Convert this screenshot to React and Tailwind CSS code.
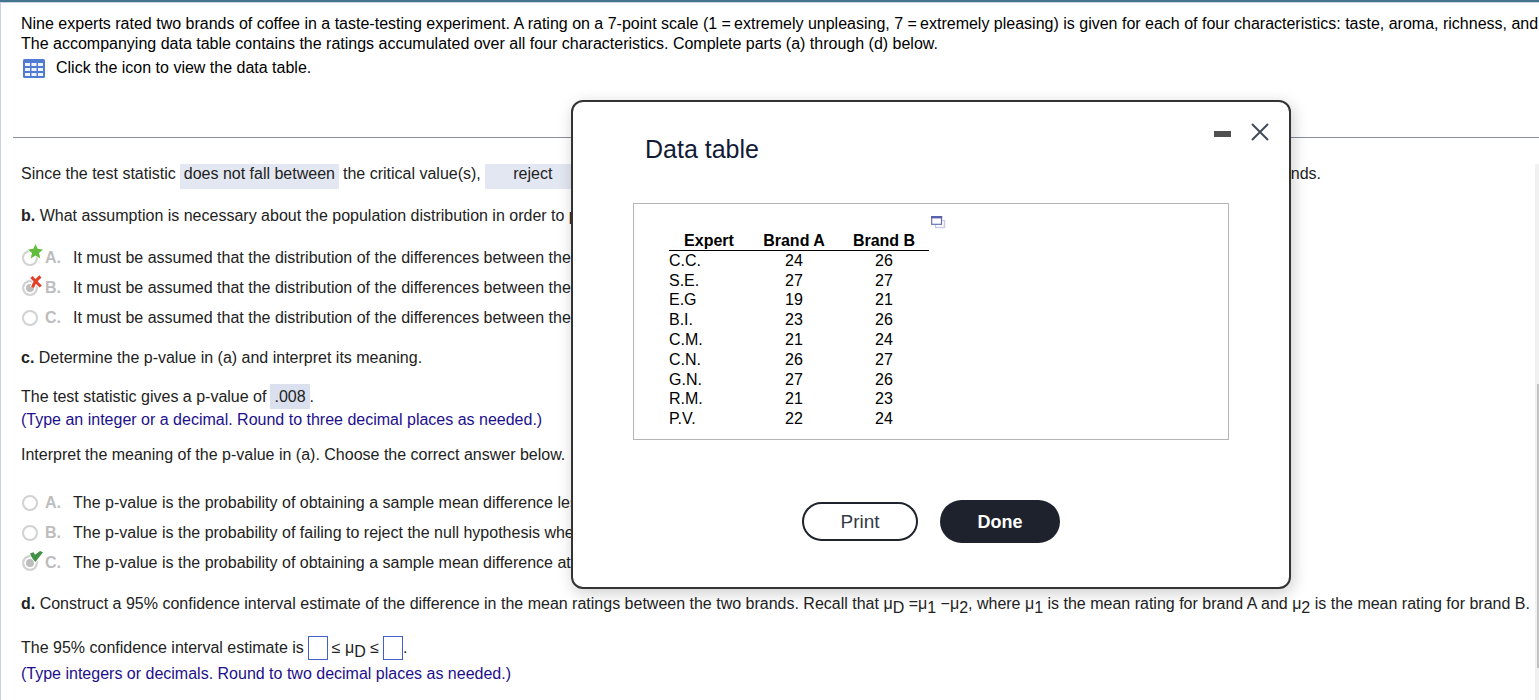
import { useState } from "react";

const ratings = [
  { expert: "C.C.", a: 24, b: 26 },
  { expert: "S.E.", a: 27, b: 27 },
  { expert: "E.G", a: 19, b: 21 },
  { expert: "B.I.", a: 23, b: 26 },
  { expert: "C.M.", a: 21, b: 24 },
  { expert: "C.N.", a: 26, b: 27 },
  { expert: "G.N.", a: 27, b: 26 },
  { expert: "R.M.", a: 21, b: 23 },
  { expert: "P.V.", a: 22, b: 24 },
];

const assumptionChoices = [
  { letter: "A", text: "It must be assumed that the distribution of the differences between the measurements is normal.", mark: "star" },
  { letter: "B", text: "It must be assumed that the distribution of the differences between the measurements is skewed.", mark: "cross", checked: true },
  { letter: "C", text: "It must be assumed that the distribution of the differences between the measurements is uniform." },
];

const meaningChoices = [
  { letter: "A", text: "The p-value is the probability of obtaining a sample mean difference less than the observed one." },
  { letter: "B", text: "The p-value is the probability of failing to reject the null hypothesis when it is false." },
  { letter: "C", text: "The p-value is the probability of obtaining a sample mean difference at least as extreme.", mark: "check", checked: true },
];

const TableIcon = () => (
  <svg width="22" height="20" viewBox="0 0 22 20" aria-hidden="true">
    <rect x="0" y="0" width="22" height="19" rx="1.5" fill="#4f7bd3" />
    <g fill="#eef3fd">
      <rect x="2" y="4" width="5" height="3" />
      <rect x="8.5" y="4" width="5" height="3" />
      <rect x="15" y="4" width="5" height="3" />
      <rect x="2" y="9" width="5" height="3" />
      <rect x="8.5" y="9" width="5" height="3" />
      <rect x="15" y="9" width="5" height="3" />
      <rect x="2" y="14" width="5" height="3" />
      <rect x="8.5" y="14" width="5" height="3" />
      <rect x="15" y="14" width="5" height="3" />
    </g>
  </svg>
);

const CopyIcon = () => (
  <svg width="15" height="13" viewBox="0 0 15 13" aria-hidden="true">
    <rect x="4.5" y="4.5" width="9" height="7" fill="#fff" stroke="#c9cbe8" strokeWidth="1.4" />
    <rect x="0.7" y="1" width="9.8" height="7.3" fill="#fff" stroke="#6a70b4" strokeWidth="1.2" />
    <rect x="0" y="0" width="11.2" height="2.4" fill="#5a61ab" />
  </svg>
);

// the white outlines cut the mark out of the radio's ring
const Mark = ({ type }) => {
  if (type === "star") {
    return (
      <svg className="absolute -top-1.5 left-1.5 overflow-visible" width="15" height="15" viewBox="0 0 15 15" aria-hidden="true">
        <path d="M7.5 0 L9.6 4.8 L15 5.4 L11 8.9 L12.3 14.4 L7.5 11.4 L2.7 14.4 L4 8.9 L0 5.4 L5.4 4.8 Z" fill="#62bd3c" stroke="#fff" strokeWidth="1.5" paintOrder="stroke" />
      </svg>
    );
  }
  if (type === "cross") {
    return (
      <svg className="absolute -top-1 left-2 overflow-visible" width="12" height="12" viewBox="0 0 12 12" aria-hidden="true">
        <path d="M1.5 1 C4 4 7 7 10.8 10.5 M10.5 0.5 C6 4 4 7 2.5 11.5" stroke="#fff" strokeWidth="5" fill="none" />
        <path d="M1.5 1 C4 4 7 7 10.8 10.5 M10.5 0.5 C6 4 4 7 2.5 11.5" stroke="#e23f26" strokeWidth="3" fill="none" />
      </svg>
    );
  }
  return (
    <svg className="absolute -top-1 left-2 overflow-visible" width="13" height="12" viewBox="0 0 13 12" aria-hidden="true">
      <path d="M0 2.5 L3.5 1.2 L5 3.8 L10 0 L13 1.2 C10.5 4.5 8 7.5 5.4 11 C3 8.5 1 5.5 0 2.5 Z" fill="#3f9145" stroke="#fff" strokeWidth="1.5" paintOrder="stroke" />
    </svg>
  );
};

const Choices = ({ name, label, items, className }) => (
  <div role="radiogroup" aria-label={label} className={`flex flex-col gap-2.5 ${className}`}>
    {items.map((item) => (
      <label key={item.letter} className="flex items-center whitespace-nowrap">
        <span className="relative ml-px mr-[7px] flex">
          <input
            type="radio"
            name={name}
            defaultChecked={item.checked}
            disabled
            className="appearance-none size-4 rounded-full border-2 border-[#d2d2d2] bg-white checked:bg-[#bdbdbd] checked:shadow-[inset_0_0_0_2px_white]"
          />
          {item.mark && <Mark type={item.mark} />}
        </span>
        <span className="w-7 font-bold text-[#bdbdbd]">{item.letter}.</span>
        <span>{item.text}</span>
      </label>
    ))}
  </div>
);

const Mu = ({ sub }) => (
  <span>
    μ<sub className="text-base leading-none">{sub}</sub>
  </span>
);

const DataTableDialog = ({ onClose }) => (
  <div
    role="dialog"
    aria-labelledby="dialog-title"
    className="absolute top-[98px] left-[571px] w-[720px] rounded-xl border-2 border-[#333] bg-white px-15 pb-11 shadow-[2px_4px_16px_rgba(0,0,0,0.2)]"
  >
    <div className="flex items-start justify-between pt-5">
      <h2 id="dialog-title" className="mt-[11px] ml-3 text-[25px] leading-8 text-[#131a35]">Data table</h2>
      <div className="-mr-10 flex items-center gap-5">
        <button type="button" aria-label="Minimize" className="flex h-5 items-center pt-1">
          <span className="block h-1.5 w-[17px] bg-[#505050]" />
        </button>
        <button type="button" aria-label="Close" className="flex h-5 items-center" onClick={onClose}>
          <svg width="18" height="18" viewBox="0 0 18 18" aria-hidden="true">
            <path d="M1 1 L17 17 M17 1 L1 17" stroke="#414b59" strokeWidth="2" />
          </svg>
        </button>
      </div>
    </div>

    <div className="mt-[38px] flex items-start border border-[#b5b5b5] pt-3 pb-2.5 pl-[35px]">
      <table className="mt-4 h-[197px] w-65 table-fixed border-collapse text-center text-black">
        <thead>
          <tr className="border-b border-black leading-[18px]">
            <th className="w-20 p-0">Expert</th>
            <th className="p-0">Brand A</th>
            <th className="p-0">Brand B</th>
          </tr>
        </thead>
        <tbody>
          {ratings.map((row) => (
            <tr key={row.expert} className="leading-[18px]">
              <td className="p-0 text-left">{row.expert}</td>
              <td className="p-0">{row.a}</td>
              <td className="p-0">{row.b}</td>
            </tr>
          ))}
        </tbody>
      </table>
      <button type="button" aria-label="Copy table" className="ml-0.5">
        <CopyIcon />
      </button>
    </div>

    <div className="mt-15 flex items-center justify-center gap-[22px]">
      <button type="button" className="h-[39px] w-[116px] rounded-full border-2 border-[#1e222d] text-[19px] text-[#333a46]">
        Print
      </button>
      <button type="button" className="h-[43px] w-[120px] rounded-full bg-[#1e222d] text-lg font-bold text-white" onClick={onClose}>
        Done
      </button>
    </div>
  </div>
);

const App = () => {
  const [open, setOpen] = useState(true);

  return (
    <div className="relative h-screen overflow-hidden border-t-2 border-[#44758f] bg-white font-['Liberation_Sans',Arial,sans-serif] text-base leading-5 text-[#222]">
      <div className="flex h-full flex-col border-t border-l border-[#cdd0e2] pl-3">
        <header className="pl-2 pt-[11px] text-black">
          <p className="whitespace-nowrap">
            Nine experts rated two brands of coffee in a taste-testing experiment. A rating on a 7-point scale (1 =&thinsp;extremely unpleasing, 7 =&thinsp;extremely pleasing) is given for each of four characteristics: taste, aroma, richness, and acidity.
          </p>
          <p>
            The accompanying data table contains the ratings accumulated over all four characteristics. Complete parts (a) through (d) below.
          </p>
          <button type="button" className="mt-1 flex items-start gap-[11px] pl-0.5" onClick={() => setOpen(true)}>
            <span className="mt-px"><TableIcon /></span>
            <span>Click the icon to view the data table.</span>
          </button>
        </header>

        <hr className="mt-[58px] border-[#8a8d9b]" />

        <div className="mt-[26px] flex min-h-0 flex-1">
          <main className="min-w-0 flex-1 pl-2">
            <p className="flex h-[25px] max-w-[1300px] items-start whitespace-nowrap">
              Since the test statistic
              <span className="mx-1 h-[25px] bg-[#e3e7f1] px-1">does not fall between</span>
              the critical value(s),
              <span className="mx-1 h-[25px] w-24 bg-[#e3e7f1] text-center">reject</span>
              <span className="ml-auto">
                H<sub>0</sub>. There is sufficient evidence of a difference in the mean ratings between the two brands.
              </span>
            </p>
            <p className="mt-[17px] whitespace-nowrap">
              <b>b.</b> What assumption is necessary about the population distribution in order to perform this test?
            </p>
            <Choices name="assumption" label="Assumption" items={assumptionChoices} className="mt-[22px]" />
            <p className="mt-5">
              <b>c.</b> Determine the p-value in (a) and interpret its meaning.
            </p>
            <p className="mt-4 flex">
              <span className="mt-[3px]">The test statistic gives a p-value of</span>
              <span className="ml-1 h-[25px] bg-[#dbe0ee] px-1 pt-[3px]">.008</span>
              <span className="mt-[3px]">.</span>
            </p>
            <p className="mt-px text-[#1d0f8c]">(Type an integer or a decimal. Round to three decimal places as needed.)</p>
            <p className="mt-[15px]">Interpret the meaning of the p-value in (a). Choose the correct answer below.</p>
            <Choices name="meaning" label="Meaning of the p-value" items={meaningChoices} className="mt-7" />
            <p className="mt-[21px] whitespace-nowrap">
              <b>d.</b> Construct a 95% confidence interval estimate of the difference in the mean ratings between the two brands. Recall that <Mu sub="D" /> =<Mu sub="1" /> −<Mu sub="2" />, where <Mu sub="1" /> is the mean rating for brand A and <Mu sub="2" /> is the mean rating for brand B.
            </p>
            <p className="mt-[22px] flex items-center">
              The 95% confidence interval estimate is
              <input type="text" aria-label="Lower limit" className="mx-1 h-6 w-5 border border-[#4060c8]" />
              <span>≤ <Mu sub="D" /> ≤</span>
              <input type="text" aria-label="Upper limit" className="ml-1 h-6 w-5 border border-[#4060c8]" />
              .
            </p>
            <p className="mt-1 text-[#1d0f8c]">(Type integers or decimals. Round to two decimal places as needed.)</p>
          </main>
          {/* scroll track */}
          <div className="flex w-1 flex-col items-end bg-[#f1f1f1]">
            <div className="h-[41%]" />
            <div className="h-[53%] w-0.5 bg-[#c1c1c1]" />
          </div>
        </div>
      </div>
      {open && <DataTableDialog onClose={() => setOpen(false)} />}
    </div>
  );
};

export default App;
